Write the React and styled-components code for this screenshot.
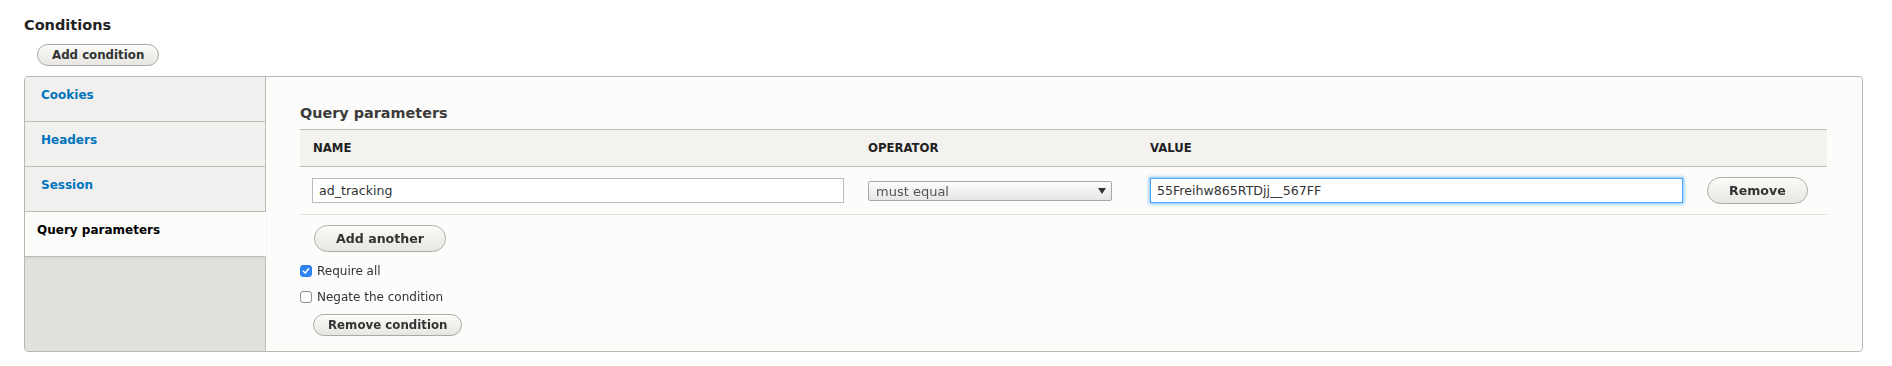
import React from "react";
import styled, { createGlobalStyle, css } from "styled-components";

const Global = createGlobalStyle`
  html, body { margin: 0; padding: 0; background: #ffffff; }
  body { font-family: "DejaVu Sans", "Liberation Sans", sans-serif; color: #333; }
  * { box-sizing: border-box; }
`;

const Page = styled.div`
  padding: 15px 29px 0 24px;
`;

const Title = styled.h2`
  margin: 0;
  font-size: 14.5px;
  line-height: 20px;
  font-weight: bold;
  color: #222;
`;

const Button = styled.button`
  display: inline-flex;
  align-items: center;
  justify-content: center;
  height: ${(p) => (p.$big ? 27 : 22)}px;
  padding: 0 ${(p) => (p.$big ? 21 : 14)}px;
  font-family: "DejaVu Sans", sans-serif;
  font-weight: bold;
  font-size: ${(p) => (p.$big ? 12.6 : 11.8)}px;
  color: #333;
  border: 1px solid #a9a9a6;
  border-radius: 20px;
  background: linear-gradient(#fbfbf9, #e7e6e1);
  box-shadow: inset 0 1px 0 #fff;
  cursor: pointer;
  white-space: nowrap;
  margin-left: ${(p) => p.$ml || 0}px;
  margin-top: ${(p) => p.$mt || 0}px;
`;

const TopButtonRow = styled.div`
  margin: 9px 0 10px 13px;
  display: flex;
`;

const Panel = styled.div`
  display: flex;
  border: 1px solid #b7b7b4;
  border-radius: 4px;
  background: #fcfcfa;
  overflow: hidden;
`;

const TabList = styled.ul`
  list-style: none;
  margin: 0;
  padding: 0;
  width: 241px;
  flex: none;
  display: flex;
  flex-direction: column;
`;

const Tab = styled.li`
  height: 45px;
  padding: 10px 15px 0 ${(p) => (p.$active ? 12 : 16)}px;
  font-size: 12px;
  line-height: 16px;
  font-weight: bold;
  color: ${(p) => (p.$active ? "#000" : "#0074bd")};
  background: ${(p) => (p.$active ? "#fcfcfa" : "#f1f0ee")};
  border-bottom: 1px solid #bdbcb8;
  border-right: 1px solid ${(p) => (p.$active ? "transparent" : "#bdbcb8")};
  ${(p) =>
    p.$active &&
    css`
      box-shadow: 0 1px 2px rgba(0, 0, 0, 0.08);
      position: relative;
    `}
`;

const TabFiller = styled.li`
  flex: 1;
  background: #e2e0dc;
  border-right: 1px solid #bdbcb8;
`;

const Content = styled.div`
  flex: 1;
  padding: 26px 35px 15px 34px;
  display: flex;
  flex-direction: column;
  align-items: flex-start;
`;

const SectionTitle = styled.h3`
  margin: 0 0 6px;
  font-size: 14.4px;
  line-height: 20px;
  font-weight: bold;
  color: #3b3b3b;
`;

const Table = styled.div`
  width: 100%;
  display: grid;
  grid-template-columns: 556px 282px 557px 1fr;
`;

const HeadCell = styled.div`
  height: 38px;
  display: flex;
  align-items: center;
  padding-left: ${(p) => (p.$first ? 13 : 12)}px;
  background: #f3f2ef;
  border-top: 1px solid #bfbebb;
  border-bottom: 1px solid #bfbebb;
  font-size: 11.7px;
  font-weight: bold;
  text-transform: uppercase;
  color: #222;
`;

const Cell = styled.div`
  height: 48px;
  display: flex;
  align-items: center;
  padding-left: 12px;
  border-bottom: 1px solid #e1e0dc;
`;

const TextInput = styled.input`
  width: ${(p) => p.$w}px;
  height: 25px;
  padding: 0 6px;
  font-family: "DejaVu Sans", sans-serif;
  font-size: 12.6px;
  color: #333;
  background: #fff;
  border: 1px solid ${(p) => (p.$focus ? "#4aa8ff" : "#bcbcbc")};
  border-radius: 0;
  outline: none;
  caret-color: #222;
  ${(p) =>
    p.$focus &&
    css`
      box-shadow: 0 0 3px 1px rgba(80, 170, 255, 0.75);
    `}
`;

const SelectWrap = styled.div`
  position: relative;
  width: 244px;
  height: 20px;
`;

const Select = styled.select`
  appearance: none;
  -webkit-appearance: none;
  width: 100%;
  height: 100%;
  padding: 0 22px 0 7px;
  font-family: "DejaVu Sans", sans-serif;
  font-size: 13px;
  color: #555;
  border: 1px solid #a8a8a8;
  border-radius: 2px;
  background: linear-gradient(#fcfcfc, #e6e6e6);
  outline: none;
`;

const Arrow = styled.svg`
  position: absolute;
  right: 6px;
  top: 7px;
  pointer-events: none;
`;

const Actions = styled.div`
  display: flex;
  flex-direction: column;
  align-items: flex-start;
`;

const CheckRow = styled.label`
  display: flex;
  align-items: center;
  height: 20px;
  margin-top: ${(p) => p.$mt}px;
  font-size: 12px;
  color: #333;
  gap: 5px;
`;

const Box = styled.span`
  width: 12px;
  height: 12px;
  border-radius: 3px;
  display: inline-flex;
  align-items: center;
  justify-content: center;
  background: ${(p) => (p.$checked ? "#2f86f3" : "#fff")};
  border: 1px solid ${(p) => (p.$checked ? "#2b7de6" : "#8e8e8e")};
`;

function Checkbox({ checked, label, mt }) {
  return (
    <CheckRow $mt={mt}>
      <Box $checked={checked}>
        {checked && (
          <svg width="8" height="8" viewBox="0 0 8 8">
            <path d="M1.3 4.2 L3.2 6 L6.7 1.8" fill="none" stroke="#fff" strokeWidth="1.5" strokeLinecap="round" strokeLinejoin="round" />
          </svg>
        )}
      </Box>
      {label}
    </CheckRow>
  );
}

export default function App() {
  const focusEnd = (e) => {
    const v = e.target.value.length;
    e.target.setSelectionRange(v, v);
  };
  return (
    <>
      <Global />
      <Page>
        <Title>Conditions</Title>
        <TopButtonRow>
          <Button>Add condition</Button>
        </TopButtonRow>
        <Panel>
          <TabList>
            <Tab>Cookies</Tab>
            <Tab>Headers</Tab>
            <Tab>Session</Tab>
            <Tab $active>Query parameters</Tab>
            <TabFiller />
          </TabList>
          <Content>
            <SectionTitle>Query parameters</SectionTitle>
            <Table>
              <HeadCell $first>Name</HeadCell>
              <HeadCell>Operator</HeadCell>
              <HeadCell>Value</HeadCell>
              <HeadCell />
              <Cell>
                <TextInput $w={532} defaultValue="ad_tracking" />
              </Cell>
              <Cell>
                <SelectWrap>
                  <Select defaultValue="equal">
                    <option value="equal">must equal</option>
                    <option value="contain">must contain</option>
                  </Select>
                  <Arrow width="8" height="6" viewBox="0 0 8 6">
                    <path d="M0 0 H8 L4 6 Z" fill="#333" />
                  </Arrow>
                </SelectWrap>
              </Cell>
              <Cell>
                <TextInput $w={533} $focus autoFocus onFocus={focusEnd} defaultValue="55Freihw865RTDjj__567FF" />
              </Cell>
              <Cell>
                <Button $big>Remove</Button>
              </Cell>
            </Table>
            <Actions>
              <Button $big $ml={14} $mt={10}>Add another</Button>
              <Checkbox checked label="Require all" mt={9} />
              <Checkbox label="Negate the condition" mt={6} />
              <Button $ml={13} $mt={7}>Remove condition</Button>
            </Actions>
          </Content>
        </Panel>
      </Page>
    </>
  );
}
